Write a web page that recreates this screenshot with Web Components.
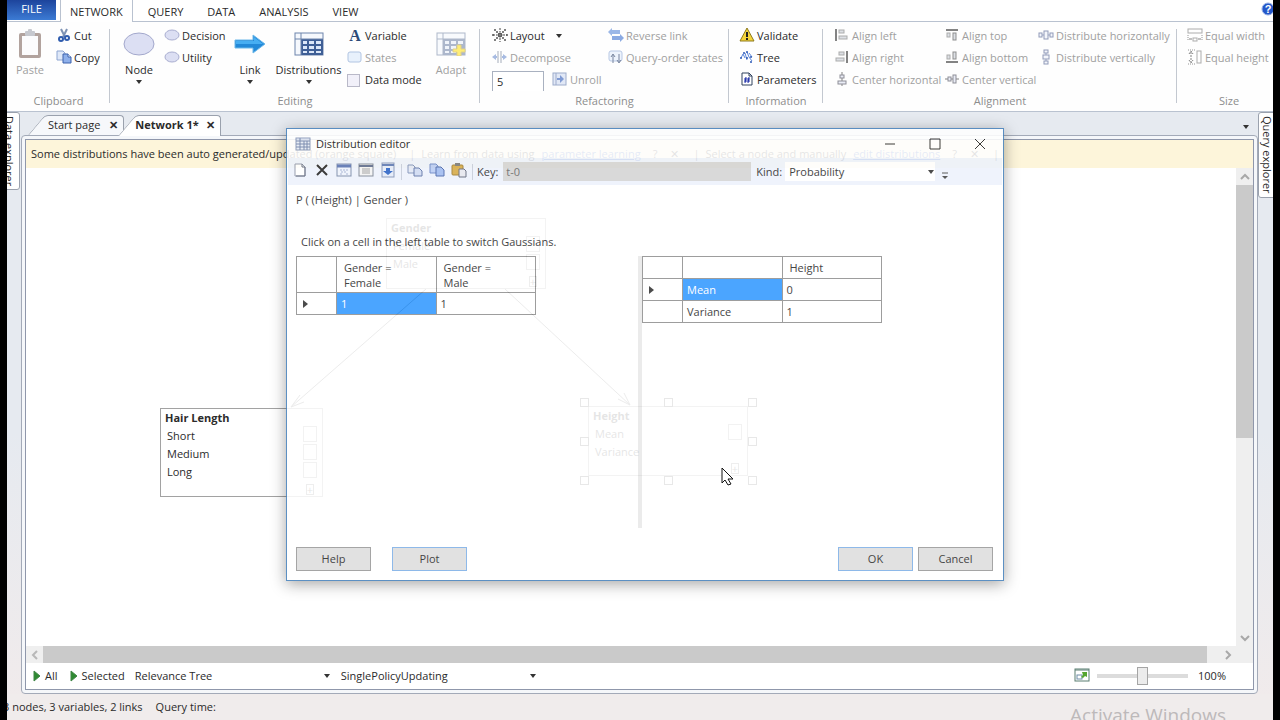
<!DOCTYPE html>
<html lang="en">
<head>
<meta charset="utf-8">
<title>Network designer</title>
<style>
    html, body {
        margin: 0;
        height: 100%;
        background: #000;
        overflow: hidden;
    }
    body {
        font: 11px/14px "Open Sans", "Noto Sans", sans-serif;
        color: #2b2b2b;
    }
</style>
</head>
<body>
<app-window></app-window>

<script>
const ICONS = {
    paste: ['26 30', `<rect x="2" y="4" width="22" height="25" rx="2" fill="#80685f"/><rect x="5" y="7" width="16" height="19" fill="#fcfcfd"/><rect x="8" y="2" width="10" height="5" rx="1" fill="#a4a7b0"/><rect x="11" width="4" height="3" rx="1" fill="#a4a7b0"/>`],
    cut: ['16 16', `<path d="M5 2l4 8M11 2L7 10" stroke="#7d92b4" stroke-width="2" fill="none"/><circle cx="5" cy="12" r="2" fill="none" stroke="#2f5cae" stroke-width="2"/><circle cx="11" cy="11" r="2" fill="none" stroke="#2f5cae" stroke-width="2"/>`],
    copy: ['16 16', `<path d="M1 2h6l2 2v7H1z" fill="#dfe8f8" stroke="#8ea6d2"/><path d="M7 5h5l3 3v6H7z" fill="#8fb0ea" stroke="#3d63ad"/><path d="M12 5v3h3" fill="#fff" stroke="#3d63ad"/>`],
    node: ['32 24', `<ellipse cx="16" cy="12" rx="15" ry="11" fill="#dcdff3" stroke="#a3a8cc"/>`],
    oval: ['16 16', `<ellipse cx="8" cy="8" rx="7" ry="5" fill="#dcdff3" stroke="#a9aed0"/>`],
    link: ['32 24', `<path d="M1 8h18V3l12 9-12 9v-5H1z" fill="#2389d8" stroke="#6db9ea"/><path d="M2 9h18V5l9 7H2z" fill="#47aef2"/>`],
    dist: ['32 24', `<rect x="2" y="1" width="28" height="22" fill="#f5f8fd" stroke="#6d84ab"/><rect x="8" y="7" width="22" height="16" fill="#3f5f96"/><path d="M8 1v22M2 7h28" stroke="#6d84ab"/><path d="M10 9h4v3h-4zM16 9h5v3h-5zM23 9h5v3h-5zM10 14h4v3h-4zM16 14h5v3h-5zM23 14h5v3h-5zM10 19h4v2h-4zM16 19h5v2h-5zM23 19h5v2h-5z" fill="#dce7f8"/>`],
    adapt: ['32 24', `<rect x="2" y="1" width="28" height="22" fill="#f5f8fd" stroke="#7b8aa8"/><rect x="8" y="7" width="22" height="16" fill="#7688ab"/><path d="M8 1v22M2 7h28" stroke="#7b8aa8"/><path d="M10 9h4v3h-4zM16 9h5v3h-5zM23 9h5v3h-5zM10 14h4v3h-4zM16 14h5v3h-5zM10 19h4v2h-4zM16 19h5v2h-5z" fill="#e7eef9"/><path d="M22 13h4v4h4v3h-4v4h-4v-4h-4v-3h4z" fill="#ffe21c" stroke="#cfb53a"/>`],
    variable: ['16 16', `<text x="8" y="14" text-anchor="middle" font-family="Liberation Serif, serif" font-weight="bold" font-size="16" fill="#2c4a78">A</text>`],
    states: ['16 16', `<rect x="1" y="3" width="13" height="10" rx="2" fill="#dbe9fc" stroke="#7f9fd0"/>`],
    layout: ['16 16', `<g fill="none" stroke="#444"><circle cx="8" cy="8" r="2" fill="#777"/><path d="M8 1v4M8 11v4M1 8h4M11 8h4" stroke-dasharray="2 1"/></g><g fill="#555"><circle cx="3" cy="3" r="1"/><circle cx="13" cy="3" r="1"/><circle cx="3" cy="13" r="1"/><circle cx="13" cy="13" r="1"/><circle cx="1" cy="8" r="1"/><circle cx="15" cy="8" r="1"/><circle cx="5" cy="5" r="1"/><circle cx="11" cy="5" r="1"/><circle cx="5" cy="11" r="1"/><circle cx="11" cy="11" r="1"/></g>`],
    decompose: ['16 16', `<path d="M6 2v12M9 2v12" stroke="#6b7690"/><path d="M0 8l4-3v2h1v2H4v2zM15 8l-4-3v2h-1v2h1v2z" fill="#6f8fd0"/>`],
    unroll: ['16 16', `<rect x="1" y="2" width="13" height="12" fill="#cfdaf2" stroke="#5f77aa"/><path d="M4 2v12" stroke="#5f77aa"/><path d="M5 7h3V4l4 4-4 4V9H5z" fill="#2c58b8"/>`],
    reverse: ['16 16', `<path d="M0 5l4-4v2h8v4H4v2z" fill="#5a88d8"/><path d="M16 11l-4-4v2H4v4h8v2z" fill="#3f74d0"/>`],
    order: ['16 16', `<rect x="1" y="2" width="13" height="10" rx="2" fill="#e3ecfb" stroke="#8ba6d6"/><path d="M5 14V6M3 8l2-3 2 3M11 5v8M9 11l2 3 2-3" fill="none" stroke="#1f3560"/>`],
    validate: ['16 16', `<path d="M8 1l7 13H1z" fill="#f5d43a" stroke="#8d7a1e"/><path d="M8 5v5" stroke="#222" stroke-width="2"/><path d="M8 11v2" stroke="#222" stroke-width="2"/>`],
    tree: ['16 16', `<path d="M2 9l2-4 2 4M6 4l2 7M8 3l2 5M10 8l3 4M10 4l3 4" fill="none" stroke="#5a86dc"/><g fill="#2c59b4"><circle cx="2" cy="9" r="1"/><circle cx="5" cy="4" r="1"/><circle cx="8" cy="3" r="1"/><circle cx="8" cy="9" r="1"/><circle cx="12" cy="13" r="1"/><circle cx="12" cy="8" r="1"/></g>`],
    params: ['16 16', `<path d="M3 2h7l3 3v9H3z" fill="#fff" stroke="#31435f"/><path d="M10 2v3h3" fill="none" stroke="#31435f"/><path d="M7 6L6 12M10 6l-1 6M5 8h6M5 10h6" stroke="#1c2ca8"/>`],
    alignLeft: ['16 16', `<path d="M2 2v12" stroke="#333" stroke-width="2"/><rect x="5" y="3" width="5" height="3" fill="#c8cdd6" stroke="#777"/><rect x="5" y="9" width="8" height="3" fill="#c8cdd6" stroke="#777"/>`],
    alignRight: ['16 16', `<path d="M13 2v12" stroke="#333" stroke-width="2"/><rect x="5" y="3" width="5" height="3" fill="#c8cdd6" stroke="#777"/><rect x="2" y="9" width="8" height="3" fill="#c8cdd6" stroke="#777"/>`],
    centerH: ['16 16', `<path d="M8 1v14" stroke="#333"/><rect x="6" y="4" width="4" height="3" fill="#dde2f2" stroke="#445"/><rect x="4" y="10" width="8" height="3" fill="#dde2f2" stroke="#445"/>`],
    alignTop: ['16 16', `<path d="M2 3h12" stroke="#333" stroke-width="2"/><rect x="3" y="6" width="3" height="4" fill="#c8cdd6" stroke="#777"/><rect x="9" y="6" width="3" height="7" fill="#c8cdd6" stroke="#444"/>`],
    alignBottom: ['16 16', `<path d="M2 13h12" stroke="#333" stroke-width="2"/><rect x="3" y="6" width="3" height="4" fill="#c8cdd6" stroke="#777"/><rect x="9" y="3" width="3" height="7" fill="#c8cdd6" stroke="#444"/>`],
    centerV: ['16 16', `<path d="M1 8h14" stroke="#333"/><rect x="4" y="6" width="3" height="4" fill="#dde2f2" stroke="#445"/><rect x="9" y="4" width="3" height="8" fill="#dde2f2" stroke="#445"/>`],
    distH: ['16 16', `<path d="M1 8h14" stroke="#6574a5"/><rect x="1" y="6" width="3" height="4" fill="#eef1fa" stroke="#4a5a8c"/><rect x="6" y="4" width="4" height="8" fill="#eef1fa" stroke="#4a5a8c"/><rect x="12" y="6" width="3" height="4" fill="#eef1fa" stroke="#4a5a8c"/>`],
    distV: ['16 16', `<path d="M8 1v14" stroke="#6574a5"/><rect x="6" y="1" width="4" height="3" fill="#eef1fa" stroke="#4a5a8c"/><rect x="5" y="6" width="6" height="4" fill="#eef1fa" stroke="#4a5a8c"/><rect x="6" y="12" width="4" height="3" fill="#eef1fa" stroke="#4a5a8c"/>`],
    equalW: ['16 16', `<rect x="1" y="2" width="14" height="4" fill="#fff" stroke="#777"/><path d="M1 8v6M15 8v6" stroke="#555" stroke-dasharray="1 1"/><rect x="6" y="11" width="4" height="3" fill="#fff" stroke="#777"/><path d="M2 12h3M11 12h3" stroke="#333"/>`],
    equalH: ['16 16', `<rect x="10" y="2" width="4" height="12" fill="#fff" stroke="#777"/><path d="M1 1h8M1 15h8" stroke="#555" stroke-dasharray="1 1"/><path d="M4 3v10M2 5l2-3 2 3M2 11l2 3 2-3" fill="none" stroke="#333" stroke-dasharray="2 1"/>`],
    help: ['14 14', `<circle cx="7" cy="7" r="6" fill="#2457c9" stroke="#93aee6"/><text x="7" y="11" text-anchor="middle" font-family="Liberation Sans, sans-serif" font-weight="bold" font-size="11" fill="#fff">?</text>`],
    play: ['8 12', `<path d="M1 1l6 5-6 5z" fill="#2f8a32" stroke="#3f8545"/>`],
    fit: ['16 14', `<rect x="1" y="1" width="14" height="12" fill="#fff" stroke="#5b7f72"/><path d="M1 2h14" stroke="#5b7f72"/><rect x="3" y="7" width="5" height="4" fill="#fff" stroke="#6f8ea8"/><path d="M8 4h5v5l-2-1-2 2-2-1 2-2z" fill="#55a52f"/>`],
    grid: ['16 14', `<rect x="1" y="1" width="14" height="12" fill="#e6ecf8" stroke="#8494b5"/><path d="M1 4h14M1 7h14M1 10h14M5 1v12M9 4v9M12 4v9" stroke="#6d80aa"/>`],
    page: ['16 16', `<path d="M3 2h7l3 3v9H3z" fill="#fff" stroke="#8c93a6"/><path d="M10 2v3h3v9H4" fill="none" stroke="#5a6278"/>`],
    cross: ['16 16', `<path d="M3 3l10 10M13 3L3 13" stroke="#222" stroke-width="2"/>`],
    form: ['16 16', `<rect x="1" y="2" width="14" height="12" fill="#eff3fc" stroke="#7685a5"/><path d="M1 4h14" stroke="#5672b4" stroke-width="3"/><path d="M4 8h2M7 8h2M10 8h2M5 10h2M8 10h2M4 12h2M10 12h2" stroke="#9fadce"/>`],
    list: ['16 16', `<rect x="1" y="2" width="14" height="12" fill="#f3f3f3" stroke="#7b8291"/><path d="M1 4h14" stroke="#5b6a8c" stroke-width="2"/><path d="M4 7h8M4 9h8M4 11h8" stroke="#999"/>`],
    down: ['16 16', `<rect x="2" y="1" width="12" height="14" fill="#e4ebf9" stroke="#8191b5"/><path d="M2 3h12" stroke="#5b77b4" stroke-width="2"/><path d="M6 6h4v3h3l-5 4-5-4h3z" fill="#2760c4"/>`],
    docs: ['16 16', `<path d="M1 3h5l2 2v6H1z" fill="#e2e8f5" stroke="#7b8db6"/><path d="M7 6h5l3 3v5H7z" fill="#cfdaf2" stroke="#5b71a4"/>`],
    docsBlue: ['16 16', `<path d="M1 2h6l2 2v7H1z" fill="#b9ccf4" stroke="#6783c4"/><path d="M7 5h5l3 3v6H7z" fill="#9fbaf0" stroke="#4563a8"/>`],
    clip: ['16 16', `<rect x="1" y="3" width="11" height="10" rx="1" fill="#d6a945" stroke="#9d7a2b"/><rect x="4" y="1" width="5" height="3" fill="#777"/><path d="M8 7h5l2 2v6H8z" fill="#e6e8ee" stroke="#5e6478"/>`],
    min: ['12 12', `<path d="M1 6h10" stroke="#222"/>`],
    max: ['12 12', `<path d="M1 1h10v10H1z" fill="none" stroke="#222"/>`],
    close: ['12 12', `<path d="M1 1l10 10M11 1L1 11" fill="none" stroke="#222"/>`],
    caret: ['8 6', `<path d="M1 1h6L4 5z" fill="#333"/>`],
    more: ['8 8', `<path d="M1 1h6" stroke="#444"/><path d="M1 4h6L4 7z" fill="#444"/>`],
    tri: ['6 8', `<path d="M1 0l5 4-5 4z" fill="#333"/>`],
    up: ['10 8', `<path d="M1 6l4-4 4 4" fill="none" stroke="#a8a8a8" stroke-width="2"/>`],
    dn: ['10 8', `<path d="M1 2l4 4 4-4" fill="none" stroke="#a8a8a8" stroke-width="2"/>`],
    lt: ['8 10', `<path d="M6 1L2 5l4 4" fill="none" stroke="#b8b8b8" stroke-width="2"/>`],
    rt: ['8 10', `<path d="M2 1l4 4-4 4" fill="none" stroke="#a8a8a8" stroke-width="2"/>`],
    pointer: ['13 19', `<path d="M1 1v15l3-3 3 5 3-1-3-5h5z" fill="#fff" stroke="#111"/>`]
};

class UiElement extends HTMLElement {
    constructor() {
        super();
        this.root = this.attachShadow({mode: "open"});
    }

    connectedCallback() {
        this.root.innerHTML = this.render();
    }

    flag(name) {
        return this.hasAttribute(name) ? name : "";
    }
}

const BUTTON_RESET = `
    button {
        font: inherit;
        color: inherit;
        background: none;
        border: 0;
        padding: 0;
        margin: 0;
        text-align: left;
        white-space: nowrap;
    }`;

class UiIcon extends UiElement {
    render() {
        const [size, body] = ICONS[this.getAttribute("name")];
        const [w, h] = size.split(" ");
        return `
        <style>
            :host { display: inline-flex; flex: none; }
            svg { display: block; }
        </style>
        <svg width="${w}" height="${h}" viewBox="0 0 ${w} ${h}" aria-hidden="true">${body}</svg>`;
    }
}
customElements.define("ui-icon", UiIcon);

class RibbonItem extends UiElement {
    render() {
        const caret = this.hasAttribute("menu") ? '<ui-icon name="caret"></ui-icon>' : "";
        return `
        <style>
            ${BUTTON_RESET}
            :host { display: block; }
            button { display: flex; align-items: center; gap: 2px; height: 22px; }
            button:disabled { color: #a0a0a0; }
            button:disabled ui-icon { opacity: .6; }
            ui-icon[name="caret"] { margin-left: 8px; }
            :host([big]) button { flex-direction: column; gap: 0; width: 100%; height: 66px; padding-top: 4px; box-sizing: border-box; }
            :host([big]) .pic { display: flex; align-items: center; height: 30px; }
            :host([big]) .text { height: 16px; line-height: 22px; margin-bottom: 2px; }
            :host([big]) ui-icon[name="caret"] { margin: 2px 0 0; }
        </style>
        <button type="button" ${this.flag("disabled")}>
            <span class="pic"><ui-icon name="${this.getAttribute("icon")}"></ui-icon></span>
            <span class="text"><slot></slot></span>${caret}
        </button>`;
    }
}
customElements.define("ribbon-item", RibbonItem);

class RibbonCheck extends UiElement {
    render() {
        return `
        <style>
            :host { display: block; }
            label { display: flex; align-items: center; gap: 5px; height: 22px; white-space: nowrap; }
            input { appearance: none; width: 13px; height: 13px; margin: 0; border: 1px solid #b9b9c8; background: #f1f0f9; }
        </style>
        <label><input type="checkbox"><slot></slot></label>`;
    }
}
customElements.define("ribbon-check", RibbonCheck);

class RibbonSteps extends UiElement {
    render() {
        return `
        <style>
            :host { display: block; }
            input {
                box-sizing: border-box;
                width: 52px;
                height: 20px;
                margin-top: 2px;
                padding: 0 4px;
                font: inherit;
                color: inherit;
                border: 1px solid #a9b1c0;
                border-bottom: 0;
                outline: 0;
            }
        </style>
        <input type="text" value="5" aria-label="Unroll steps">`;
    }
}
customElements.define("ribbon-steps", RibbonSteps);

class RibbonGroup extends UiElement {
    render() {
        return `
        <style>
            :host {
                display: flex;
                flex-direction: column;
                position: relative;
                min-width: 0;
                padding-top: 3px;
            }
            :host(:not([last]))::after {
                content: "";
                position: absolute;
                right: 0;
                top: 7px;
                bottom: 8px;
                width: 1px;
                background: #c3c8d0;
            }
            .cols { display: grid; grid-template-columns: var(--cols); column-gap: 4px; height: 69px; padding-left: var(--pad); }
            .name { text-align: center; color: #8d8d8d; }
        </style>
        <div class="cols"><slot></slot></div>
        <div class="name">${this.getAttribute("label")}</div>`;
    }
}
customElements.define("ribbon-group", RibbonGroup);

class RibbonTabs extends UiElement {
    render() {
        return `
        <style>
            ${BUTTON_RESET}
            :host { display: block; background: #fff; }
            nav { display: flex; align-items: flex-end; height: 22px; border-bottom: 1px solid #b9c2d0; box-sizing: border-box; }
            button { height: 20px; padding: 2px 9px 0; margin-right: 6px; }
            .file { align-self: flex-start; box-sizing: border-box; width: 49px; padding: 0 0 2px; margin: 0 4px 0 0; text-align: center; color: #fff; background: linear-gradient(#1d449c, #3c7bd4); }
            .on { height: 22px; margin-bottom: -1px; background: #fff; border: solid #b9c2d0; border-width: 0 1px; box-sizing: border-box; }
            .help { margin: 0 -2px 5px auto; padding: 0; height: 14px; }
        </style>
        <nav>
            <button type="button" class="file">FILE</button>
            <button type="button" class="on">NETWORK</button>
            <button type="button">QUERY</button>
            <button type="button">DATA</button>
            <button type="button">ANALYSIS</button>
            <button type="button">VIEW</button>
            <button type="button" class="help" aria-label="Help"><ui-icon name="help"></ui-icon></button>
        </nav>`;
    }
}
customElements.define("ribbon-tabs", RibbonTabs);

class AppRibbon extends UiElement {
    render() {
        return `
        <style>
            :host {
                display: grid;
                grid-template-columns: 103px 370px 249px 94px 354px minmax(104px, 1fr);
                height: 89px;
                background: #fefefe;
                border-bottom: 1px solid #b9c2d0;
                overflow: hidden;
            }
            .row { display: flex; gap: 8px; }
        </style>
        <ribbon-group label="Clipboard" style="--cols: 44px 50px; --pad: 1px">
            <ribbon-item big disabled icon="paste">Paste</ribbon-item>
            <div>
                <ribbon-item icon="cut">Cut</ribbon-item>
                <ribbon-item icon="copy">Copy</ribbon-item>
            </div>
        </ribbon-group>
        <ribbon-group label="Editing" style="--cols: 42px 62px 40px 69px 80px 40px; --pad: 8px">
            <ribbon-item big menu icon="node">Node</ribbon-item>
            <div>
                <ribbon-item icon="oval">Decision</ribbon-item>
                <ribbon-item icon="oval">Utility</ribbon-item>
            </div>
            <ribbon-item big menu icon="link">Link</ribbon-item>
            <ribbon-item big menu icon="dist">Distributions</ribbon-item>
            <div>
                <ribbon-item icon="variable">Variable</ribbon-item>
                <ribbon-item disabled icon="states">States</ribbon-item>
                <ribbon-check>Data mode</ribbon-check>
            </div>
            <ribbon-item big disabled icon="adapt">Adapt</ribbon-item>
        </ribbon-group>
        <ribbon-group label="Refactoring" style="--cols: 112px 118px; --pad: 12px">
            <div>
                <ribbon-item menu icon="layout">Layout</ribbon-item>
                <ribbon-item disabled icon="decompose">Decompose</ribbon-item>
                <div class="row">
                    <ribbon-steps></ribbon-steps>
                    <ribbon-item disabled icon="unroll">Unroll</ribbon-item>
                </div>
            </div>
            <div>
                <ribbon-item disabled icon="reverse">Reverse link</ribbon-item>
                <ribbon-item disabled icon="order">Query-order states</ribbon-item>
            </div>
        </ribbon-group>
        <ribbon-group label="Information" style="--cols: 80px; --pad: 10px">
            <div>
                <ribbon-item icon="validate">Validate</ribbon-item>
                <ribbon-item icon="tree">Tree</ribbon-item>
                <ribbon-item icon="params">Parameters</ribbon-item>
            </div>
        </ribbon-group>
        <ribbon-group label="Alignment" style="--cols: 106px 90px 130px; --pad: 11px">
            <div>
                <ribbon-item disabled icon="alignLeft">Align left</ribbon-item>
                <ribbon-item disabled icon="alignRight">Align right</ribbon-item>
                <ribbon-item disabled icon="centerH">Center horizontal</ribbon-item>
            </div>
            <div>
                <ribbon-item disabled icon="alignTop">Align top</ribbon-item>
                <ribbon-item disabled icon="alignBottom">Align bottom</ribbon-item>
                <ribbon-item disabled icon="centerV">Center vertical</ribbon-item>
            </div>
            <div>
                <ribbon-item disabled icon="distH">Distribute horizontally</ribbon-item>
                <ribbon-item disabled icon="distV">Distribute vertically</ribbon-item>
            </div>
        </ribbon-group>
        <ribbon-group last label="Size" style="--cols: 86px; --pad: 10px">
            <div>
                <ribbon-item disabled icon="equalW">Equal width</ribbon-item>
                <ribbon-item disabled icon="equalH">Equal height</ribbon-item>
            </div>
        </ribbon-group>`;
    }
}
customElements.define("app-ribbon", AppRibbon);

class SideTab extends UiElement {
    render() {
        return `
        <style>
            ${BUTTON_RESET}
            :host { display: block; flex: none; width: 15px; overflow: hidden; }
            button {
                writing-mode: vertical-rl;
                width: 20px;
                padding: 3px 2px 3px 0;
                box-sizing: border-box;
                background: #fff;
                border: 1px solid #9aa1ad;
                border-radius: 3px;
            }
            :host([side="left"]) { width: 14px; }
            :host([side="left"]) button { margin-left: -7px; padding-right: 3px; }
        </style>
        <button type="button"><slot></slot></button>`;
    }
}
customElements.define("side-tab", SideTab);

class DocTab extends UiElement {
    render() {
        return `
        <style>
            ${BUTTON_RESET}
            :host {
                --fill: #f6f8fb;
                position: relative;
                isolation: isolate;
                display: flex;
                align-items: center;
                gap: 9px;
                height: 20px;
                padding: 0 6px 0 20px;
                white-space: nowrap;
            }
            :host([active]) { --fill: #fff; font-weight: bold; z-index: 1; gap: 7px; margin: 0 0 -1px -6px; padding: 0 6px 1px 17px; }
            :host::before, :host::after {
                content: "";
                position: absolute;
                z-index: -1;
                top: 0;
                bottom: 0;
                box-sizing: border-box;
                background: var(--fill);
                border: 1px solid #9aa1ad;
                border-bottom: 0;
            }
            :host::before { left: 0; width: 30px; border-right: 0; border-top-left-radius: 4px; transform: skewX(-40deg); transform-origin: bottom; }
            :host::after { left: 28px; right: 0; border-left: 0; border-top-right-radius: 4px; }
            .x { font-weight: bold; }
        </style>
        <button type="button"><slot></slot></button>
        <button type="button" class="x" aria-label="Close tab">✕</button>`;
    }
}
customElements.define("doc-tab", DocTab);

class NoticeBar extends UiElement {
    render() {
        return `
        <style>
            :host { display: flex; align-items: center; height: 27px; padding: 0 0 1px 5px; background: #fdf5da; white-space: pre; overflow: hidden; }
            a { color: #2a56b8; margin: 0 12px 0 7px; }
            .x { margin: 0 1px 0 13px; }
            .bar { margin: 0 6px 0 13px; }
        </style>
        <span>Some distributions have been auto generated/updated (orange square)</span>
        <span class="bar">|</span>
        <span>Learn from data using</span><a href="#learn">parameter learning</a><span>?</span><span class="x">✕</span><span class="bar">|</span>
        <span>Select a node and manually</span><a href="#edit">edit distributions</a><span>?</span><span class="x">✕</span><span class="bar">|</span>`
            .replace(/>\s+</g, "><");
    }
}
customElements.define("notice-bar", NoticeBar);

class NetNode extends UiElement {
    render() {
        const states = this.getAttribute("states").split(",");
        return `
        <style>
            :host { display: flex; justify-content: space-between; position: absolute; box-sizing: border-box; background: #fff; border: 1px solid #a2a2a2; padding: 0 5px 0 4px; line-height: 18px; }
            b, span { display: block; }
            span { padding-left: 2px; }
            .marks { display: flex; flex-direction: column; align-items: center; padding-top: 17px; }
            i { width: 14px; height: 16px; margin-bottom: 2px; border: 1px solid #999; box-sizing: border-box; }
            .add { border: 1px solid #777; line-height: 9px; margin-top: auto; margin-bottom: 1px; }
            .grip { display: none; position: absolute; width: 7px; height: 7px; border: 1px solid #444; background: #fff; }
            :host([selected]) .grip { display: block; }
        </style>
        <div><b>${this.getAttribute("name")}</b>${states.map(s => `<span>${s}</span>`).join("")}</div>
        <div class="marks">${"<i></i>".repeat(Number(this.getAttribute("marks")))}<div class="add">+</div></div>
        ${[0, 50, 100].map(x => [0, 50, 100].map(y => x === 50 && y === 50 ? "" :
            `<div class="grip" style="left: calc(${x}% - ${9 - x / 10}px); top: calc(${y}% - ${9 - y / 10}px)"></div>`).join("")).join("")}`;
    }
}
customElements.define("net-node", NetNode);

class NetworkCanvas extends UiElement {
    render() {
        return `
        <style>
            ${BUTTON_RESET}
            :host { display: grid; grid-template: minmax(0, 1fr) 17px / minmax(0, 1fr) 17px; flex: 1; min-height: 0; }
            .board { position: relative; overflow: hidden; background: #fff; }
            .edges { position: absolute; left: 0; top: 0; }
            .v, .h { display: flex; background: #efefef; }
            .v { flex-direction: column; }
            .h { grid-column: 1 / 3; padding-right: 17px; }
            .v button, .h button { width: 17px; height: 17px; display: grid; place-items: center; flex: none; }
            .track { flex: 1; display: flex; flex-direction: inherit; }
            .thumb { background: #cacaca; }
            .v .thumb { height: 57%; }
            .h .thumb { width: 99%; }
        </style>
        <div class="board">
            <svg class="edges" width="760" height="260" fill="none" stroke="#666">
                <path d="M400 121L265 239M274 227l-9 12 13-5M479 121L604 237M592 231l12 6-6-12"/>
            </svg>
            <net-node name="Gender" states="Female,Male" marks="2" style="left: 360px; top: 50px; width: 160px; height: 71px"></net-node>
            <net-node name="Hair Length" states="Short,Medium,Long" marks="3" style="left: 134px; top: 240px; width: 163px; height: 89px"></net-node>
            <net-node selected name="Height" states="Mean,Variance" marks="1" style="left: 562px; top: 238px; width: 160px; height: 70px"></net-node>
        </div>
        <div class="v">
            <button type="button" aria-label="Scroll up"><ui-icon name="up"></ui-icon></button>
            <div class="track"><div class="thumb"></div></div>
            <button type="button" aria-label="Scroll down"><ui-icon name="dn"></ui-icon></button>
        </div>
        <div class="h">
            <button type="button" aria-label="Scroll left"><ui-icon name="lt"></ui-icon></button>
            <div class="track"><div class="thumb"></div></div>
            <button type="button" aria-label="Scroll right"><ui-icon name="rt"></ui-icon></button>
        </div>`;
    }
}
customElements.define("network-canvas", NetworkCanvas);

class QueryBar extends UiElement {
    render() {
        return `
        <style>
            ${BUTTON_RESET}
            :host { display: flex; align-items: center; height: 26px; padding: 0 27px 0 7px; background: #fff; }
            .run { display: flex; align-items: center; gap: 4px; margin-right: 12px; }
            .run + .run { margin-right: 10px; }
            .pick { display: flex; align-items: center; width: 196px; margin-right: 10px; }
            select { appearance: none; flex: 1; font: inherit; color: inherit; border: 0; background: none; padding: 0; outline: 0; }
            .fit { margin-left: auto; }
            input { appearance: none; width: 91px; height: 20px; margin: 0 10px 0 7px; background: linear-gradient(#dcdcdc, #dcdcdc) center / 100% 4px no-repeat; }
            input::-webkit-slider-thumb { appearance: none; width: 11px; height: 18px; background: #ececec; border: 1px solid #a5a5a5; box-sizing: border-box; }
        </style>
        <button type="button" class="run"><ui-icon name="play"></ui-icon>All</button>
        <button type="button" class="run"><ui-icon name="play"></ui-icon>Selected</button>
        <div class="pick"><select aria-label="Inference"><option>Relevance Tree</option></select><ui-icon name="caret"></ui-icon></div>
        <div class="pick"><select aria-label="Decisions"><option>SinglePolicyUpdating</option></select><ui-icon name="caret"></ui-icon></div>
        <button type="button" class="fit" aria-label="Zoom to fit"><ui-icon name="fit"></ui-icon></button>
        <input type="range" aria-label="Zoom" value="50">
        <span>100%</span>`;
    }
}
customElements.define("query-bar", QueryBar);

class DocPanel extends UiElement {
    render() {
        return `
        <style>
            ${BUTTON_RESET}
            :host { display: flex; flex-direction: column; flex: 1; min-width: 0; }
            .tabs { display: flex; align-items: flex-end; height: 23px; padding-left: 7px; }
            .all { margin: 0 8px 2px auto; }
            .frame { flex: 1; min-height: 0; display: flex; border: 1px solid #a3aab8; border-radius: 4px; padding: 3px; background: #f5f7fa; }
            .page { flex: 1; min-width: 0; display: flex; flex-direction: column; border: 1px solid #8f97ab; }
        </style>
        <div class="tabs">
            <doc-tab>Start page</doc-tab>
            <doc-tab active>Network 1*</doc-tab>
            <button type="button" class="all" aria-label="Open documents"><ui-icon name="caret"></ui-icon></button>
        </div>
        <div class="frame"><div class="page"><slot></slot></div></div>`;
    }
}
customElements.define("doc-panel", DocPanel);

class DialogButton extends UiElement {
    render() {
        return `
        <style>
            :host { display: block; }
            button { width: 75px; height: 24px; padding: 0; font: inherit; color: inherit; background: #dedede; border: 1px solid #999; }
            :host([accent]) button { border-color: #7fb0e6; }
        </style>
        <button type="button"><slot></slot></button>`;
    }
}
customElements.define("dialog-button", DialogButton);

/* Shared look of the two parameter tables. */
const GRID_STYLE = `
    :host { display: block; }
    table { border-collapse: collapse; table-layout: fixed; width: 240px; }
    th, td { border: 1px solid #909090; padding: 0 0 0 4px; height: 22px; font-weight: normal; text-align: left; box-sizing: border-box; }
    thead th { padding-left: 7px; line-height: 15px; border-left-color: #e0e0e0; }
    thead th:nth-child(-n+2) { border-left-color: #909090; }
    col:first-child { width: 40px; }
    .head { padding-left: 5px; }
    .head ui-icon { display: block; }
    .on { background: #3399ff; color: #fff; }`;

class CaseGrid extends UiElement {
    render() {
        return `
        <style>${GRID_STYLE} thead th { height: 36px; }</style>
        <table>
            <colgroup><col><col><col></colgroup>
            <thead><tr><th></th><th>Gender =<br>Female</th><th>Gender =<br>Male</th></tr></thead>
            <tbody><tr><th class="head"><ui-icon name="tri"></ui-icon></th><td class="on">1</td><td>1</td></tr></tbody>
        </table>`;
    }
}
customElements.define("case-grid", CaseGrid);

class GaussianGrid extends UiElement {
    render() {
        return `
        <style>${GRID_STYLE}</style>
        <table>
            <colgroup><col><col><col></colgroup>
            <thead><tr><th></th><th></th><th>Height</th></tr></thead>
            <tbody>
                <tr><th class="head"><ui-icon name="tri"></ui-icon></th><th class="on">Mean</th><td>0</td></tr>
                <tr><th></th><th>Variance</th><td>1</td></tr>
            </tbody>
        </table>`;
    }
}
customElements.define("gaussian-grid", GaussianGrid);

class DistributionDialog extends UiElement {
    render() {
        const tool = (name, label) => `<button type="button" aria-label="${label}"><ui-icon name="${name}"></ui-icon></button>`;
        return `
        <style>
            ${BUTTON_RESET}
            :host {
                position: absolute;
                display: flex;
                flex-direction: column;
                box-sizing: border-box;
                width: 718px;
                height: 453px;
                z-index: 2;
                padding: 1px;
                background: #fff;
                border: 1px solid #4681bb;
                box-shadow: 0 3px 14px rgba(0, 0, 0, .4);
                opacity: .88;
            }
            header { display: flex; align-items: center; height: 28px; padding-left: 7px; }
            header h1 { flex: 1; margin: 0 0 0 5px; font: inherit; color: #111; }
            header button { width: 45px; height: 28px; display: grid; place-items: center; }
            .tools { display: flex; align-items: center; gap: 6px; height: 27px; padding-left: 4px; background: #edf2fc; }
            .sep { width: 1px; height: 16px; background: #c5ccda; margin: 0 -1px; }
            label { margin-left: -1px; }
            .key { flex: none; width: 248px; height: 19px; box-sizing: border-box; padding: 0 3px; margin-left: -1px; border: 0; font: inherit; color: #666; background: #d4d4d4; }
            .kind { display: flex; align-items: center; flex: none; width: 150px; height: 19px; margin-left: -3px; background: #fff; }
            select { appearance: none; flex: 1; border: 0; background: none; font: inherit; color: inherit; padding: 0 0 0 4px; }
            .more { margin-top: 8px; }
            main { flex: 1; display: flex; flex-direction: column; padding: 8px 8px 0; }
            p { margin: 0; }
            .hint { margin: 28px 0 7px 5px; }
            .split { flex: 1; display: grid; grid-template-columns: 342px 4px 1fr; column-gap: 0; }
            .split div { background: #e9e9e9; }
            footer { display: flex; gap: 5px; padding: 19px 9px 8px 8px; }
            footer .gap { width: 11px; }
            footer .fill { flex: 1; }
        </style>
        <header>
            <ui-icon name="grid"></ui-icon>
            <h1>Distribution editor</h1>
            ${tool("min", "Minimize")}${tool("max", "Maximize")}${tool("close", "Close")}
        </header>
        <div class="tools">
            ${tool("page", "New")}${tool("cross", "Delete")}${tool("form", "Normalize")}${tool("list", "Uniform")}${tool("down", "Import")}
            <span class="sep"></span>
            ${tool("docs", "Copy")}${tool("docsBlue", "Copy all")}${tool("clip", "Paste")}
            <span class="sep"></span>
            <label for="key">Key:</label><input class="key" id="key" type="text" value="t-0">
            <label for="kind">Kind:</label>
            <div class="kind"><select id="kind"><option>Probability</option></select><ui-icon name="caret"></ui-icon></div>
            <ui-icon class="more" name="more"></ui-icon>
        </div>
        <main>
            <p>P ( (Height) | Gender )</p>
            <p class="hint">Click on a cell in the left table to switch Gaussians.</p>
            <section class="split">
                <case-grid></case-grid>
                <div></div>
                <gaussian-grid></gaussian-grid>
            </section>
        </main>
        <footer>
            <dialog-button>Help</dialog-button>
            <span class="gap"></span>
            <dialog-button accent>Plot</dialog-button>
            <span class="fill"></span>
            <dialog-button accent>OK</dialog-button>
            <dialog-button>Cancel</dialog-button>
        </footer>`;
    }
}
customElements.define("distribution-dialog", DistributionDialog);

class AppWindow extends UiElement {
    render() {
        return `
        <style>
            :host {
                position: relative;
                display: flex;
                flex-direction: column;
                height: 100vh;
                margin: 0 7px;
                overflow: hidden;
                background: linear-gradient(#e6eaf0 60%, #f1ebeb);
            }
            .work { position: relative; flex: 1; min-height: 0; display: flex; }
            distribution-dialog { left: 279px; top: 16px; }
            .status { display: flex; gap: 13px; height: 26px; align-items: center; margin-left: -4px; background: #f0ecec; white-space: nowrap; }
            .pointer { position: absolute; left: 714px; top: 467px; z-index: 3; }
            .mark { position: absolute; right: 47px; bottom: -7px; font-size: 19px; line-height: 24px; color: #bdb9ba; }
        </style>
        <ribbon-tabs></ribbon-tabs>
        <app-ribbon></app-ribbon>
        <div class="work">
            <side-tab side="left">Data explorer</side-tab>
            <doc-panel>
                <notice-bar></notice-bar>
                <network-canvas></network-canvas>
                <query-bar></query-bar>
            </doc-panel>
            <side-tab>Query explorer</side-tab>
            <distribution-dialog></distribution-dialog>
        </div>
        <div class="status"><span>3 nodes, 3 variables, 2 links</span><span>Query time:</span></div>
        <div class="mark">Activate Windows</div>
        <ui-icon class="pointer" name="pointer"></ui-icon>`;
    }
}
customElements.define("app-window", AppWindow);
</script>
</body>
</html>
